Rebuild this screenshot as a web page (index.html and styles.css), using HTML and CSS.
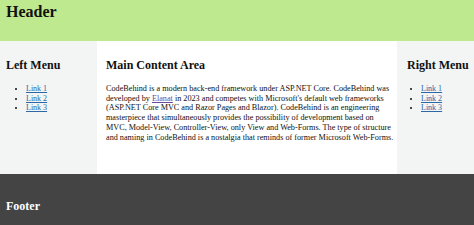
FILE: index.html
```html
<!DOCTYPE html>
<html lang="en">
<head>
    <meta charset="UTF-8">
    <meta name="viewport" content="width=device-width, initial-scale=1.0">
    <title>CodeBehind Layout</title>
    <link rel="stylesheet" href="styles.css">
</head>
<body>
    <header class="site-header">
        <h1>Header</h1>
    </header>

    <div class="page">
        <!-- Left menu -->
        <nav class="side-menu left-menu">
            <h2>Left Menu</h2>
            <ul>
                <li><a href="#">Link 1</a></li>
                <li><a href="#">Link 2</a></li>
                <li><a href="#">Link 3</a></li>
            </ul>
        </nav>

        <!-- Main content -->
        <main class="content">
            <h2>Main Content Area</h2>
            <p>CodeBehind is a modern back-end framework under ASP.NET Core. CodeBehind was developed by <a href="#" class="visited">Elanat</a> in 2023 and competes with Microsoft's default web frameworks (ASP.NET Core MVC and Razor Pages and Blazor). CodeBehind is an engineering masterpiece that simultaneously provides the possibility of development based on MVC, Model-View, Controller-View, only View and Web-Forms. The type of structure and naming in CodeBehind is a nostalgia that reminds of former Microsoft Web-Forms.</p>
        </main>

        <!-- Right menu -->
        <nav class="side-menu right-menu">
            <h2>Right Menu</h2>
            <ul>
                <li><a href="#">Link 1</a></li>
                <li><a href="#">Link 2</a></li>
                <li><a href="#">Link 3</a></li>
            </ul>
        </nav>
    </div>

    <footer class="site-footer">
        <h2>Footer</h2>
    </footer>
</body>
</html>
```

FILE: styles.css
```css
/* General */
body {
    font-family: "Liberation Serif", "Times New Roman", serif;
    margin: 0;
    padding: 0;
    color: #111;
}

a {
    color: #2d67a6;
}

a.visited {
    color: #6a4a9c;
}

/* Header */
.site-header {
    background-color: #bfe98f;
    height: 41px;
    padding: 3px 6px 0;
    box-sizing: border-box;
}

.site-header h1 {
    margin: 0;
    font-size: 16px;
}

/* Three columns */
.page {
    display: flex;
    height: 133px;
}

.side-menu {
    background-color: #f3f4f4;
}

.left-menu {
    width: 97px;
    padding: 0 6px;
    box-sizing: border-box;
}

.right-menu {
    width: 77px;
    padding: 0 4px 0 10px;
    box-sizing: border-box;
}

.content {
    flex: 1;
    background-color: #fff;
    padding: 0 3px 0 9px;
}

.side-menu h2,
.content h2 {
    font-size: 12px;
    margin: 17px 0 11px;
}

.side-menu ul {
    margin: 0;
    padding-left: 20px;
    font-size: 8px;
    line-height: 9.7px;
}

.right-menu ul {
    padding-left: 14px;
}

.content p {
    margin: 0;
    font-size: 8.2px;
    line-height: 9.7px;
}

/* Footer */
.site-footer {
    background-color: #444;
    height: 51px;
    padding: 25px 6px 0;
    box-sizing: border-box;
    color: #fff;
}

.site-footer h2 {
    margin: 0;
    font-size: 12px;
}
```
